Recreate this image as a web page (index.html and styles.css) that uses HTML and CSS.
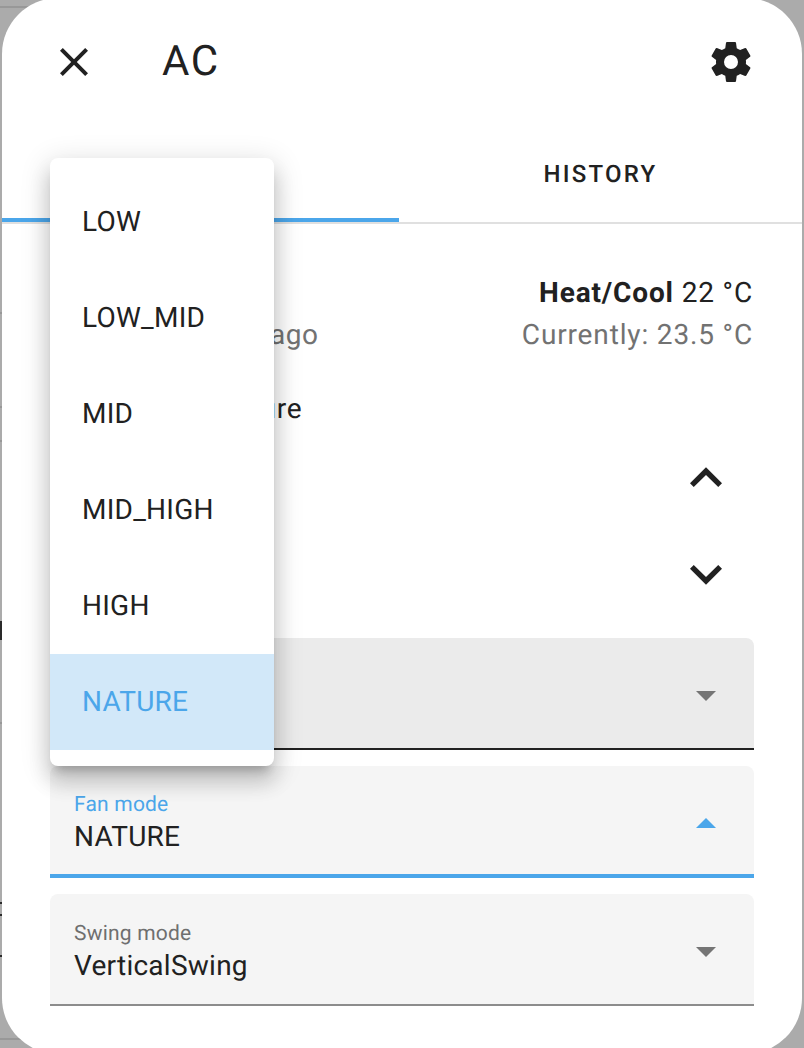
FILE: index.html
```html
<!DOCTYPE html>
<html lang="en">
<head>
<meta charset="utf-8">
<title>AC</title>
<link rel="stylesheet" href="styles.css">
</head>
<body>
<div class="backdrop-marks">
  <i class="mark line-top"></i>
  <i class="mark line-bottom"></i>
  <i class="mark m1"></i>
  <i class="mark m2"></i>
  <i class="mark m3"></i>
  <i class="mark m4"></i>
  <i class="mark m5 dark"></i>
  <i class="mark m6 dark"></i>
  <i class="mark m7 dark"></i>
  <i class="mark m8 dark"></i>
</div>
<main class="dialog">
  <header class="header">
    <button class="icon-btn">
      <svg viewBox="0 0 24 24" class="icon48"><path d="M19,6.41L17.59,5L12,10.59L6.41,5L5,6.41L10.59,12L5,17.59L6.41,19L12,13.41L17.59,19L19,17.59L13.41,12L19,6.41Z"/></svg>
    </button>
    <h1 class="title">AC</h1>
    <button class="icon-btn">
      <svg viewBox="0 0 24 24" class="icon48"><path d="M12,15.5A3.5,3.5 0 0,1 8.5,12A3.5,3.5 0 0,1 12,8.5A3.5,3.5 0 0,1 15.5,12A3.5,3.5 0 0,1 12,15.5M19.43,12.97C19.47,12.65 19.5,12.33 19.5,12C19.5,11.67 19.47,11.34 19.43,11L21.54,9.37C21.73,9.22 21.78,8.95 21.66,8.73L19.66,5.27C19.54,5.05 19.27,4.96 19.05,5.05L16.56,6.05C16.04,5.66 15.5,5.32 14.87,5.07L14.5,2.42C14.46,2.18 14.25,2 14,2H10C9.75,2 9.54,2.18 9.5,2.42L9.13,5.07C8.5,5.32 7.96,5.66 7.44,6.05L4.95,5.05C4.73,4.96 4.46,5.05 4.34,5.27L2.34,8.73C2.21,8.95 2.27,9.22 2.46,9.37L4.57,11C4.53,11.34 4.5,11.67 4.5,12C4.5,12.33 4.53,12.65 4.57,12.97L2.46,14.63C2.27,14.78 2.21,15.05 2.34,15.27L4.34,18.73C4.46,18.95 4.73,19.03 4.95,18.95L7.44,17.94C7.96,18.34 8.5,18.68 9.13,18.93L9.5,21.58C9.54,21.82 9.75,22 10,22H14C14.25,22 14.46,21.82 14.5,21.58L14.87,18.93C15.5,18.67 16.04,18.34 16.56,17.94L19.05,18.95C19.27,19.03 19.54,18.95 19.66,18.73L21.66,15.27C21.78,15.05 21.73,14.78 21.54,14.63L19.43,12.97Z"/></svg>
    </button>
  </header>

  <nav class="tabs">
    <div class="tab active"></div>
    <div class="tab">HISTORY</div>
  </nav>

  <section class="content">
    <div class="status">
      <div class="status-left">
        <div>&nbsp;</div>
        <div class="muted">Updated 2 hours ago</div>
      </div>
      <div class="status-right">
        <div><strong>Heat/Cool</strong> 22 °C</div>
        <div class="muted">Currently: 23.5 °C</div>
      </div>
    </div>

    <div class="target-label">Target temperature</div>
    <div class="stepper">
      <button class="step-btn">
        <svg viewBox="0 0 24 24" class="icon64"><path d="M7.41,15.41L12,10.83L16.59,15.41L18,14L12,8L6,14L7.41,15.41Z"/></svg>
      </button>
      <button class="step-btn">
        <svg viewBox="0 0 24 24" class="icon64"><path d="M7.41,8.58L12,13.17L16.59,8.58L18,10L12,16L6,10L7.41,8.58Z"/></svg>
      </button>
    </div>

    <div class="selects">
      <div class="select hovered">
        <div class="select-text"></div>
        <span class="arrow"></span>
      </div>
      <div class="select open">
        <div class="select-text">
          <span class="select-label">Fan mode</span>
          <span class="select-value">NATURE</span>
        </div>
        <span class="arrow"></span>
      </div>
      <div class="select">
        <div class="select-text">
          <span class="select-label">Swing mode</span>
          <span class="select-value">VerticalSwing</span>
        </div>
        <span class="arrow"></span>
      </div>
    </div>
  </section>

  <ul class="menu">
    <li class="menu-item">LOW</li>
    <li class="menu-item">LOW_MID</li>
    <li class="menu-item">MID</li>
    <li class="menu-item">MID_HIGH</li>
    <li class="menu-item">HIGH</li>
    <li class="menu-item selected">NATURE</li>
  </ul>
</main>
</body>
</html>
```

FILE: styles.css
```css
* { box-sizing: border-box; }

html, body {
  margin: 0;
  height: 1048px;
  overflow: hidden;
}

body {
  position: relative;
  background: #ababab;
  font-family: Roboto, "Liberation Sans", sans-serif;
  color: #212121;
  text-rendering: geometricPrecision;
}

.backdrop-marks { position: absolute; inset: 0; }
.mark { position: absolute; left: 0; width: 2px; height: 2px; background: #989898; }
.mark.dark { background: #2a2a2a; }
.line-top { top: 6px; width: 40px; }
.line-bottom { top: 1038px; width: 40px; }
.m1 { top: 312px; }
.m2 { top: 406px; }
.m3 { top: 440px; }
.m4 { top: 722px; }
.m5 { top: 621px; height: 19px; }
.m6 { top: 902px; }
.m7 { top: 914px; }
.m8 { top: 955px; }

.dialog {
  position: relative;
  width: 800px;
  height: 1056px;
  margin: -2px 2px 0;
  background: #fff;
  border-radius: 56px;
}

button {
  border: 0;
  padding: 0;
  background: none;
  color: inherit;
  font: inherit;
}

svg { display: block; fill: currentColor; }
.icon48 { width: 48px; height: 48px; }
.icon64 { width: 64px; height: 64px; }

.header {
  display: flex;
  align-items: center;
  height: 128px;
  padding: 0 47px 0 48px;
}

.icon-btn {
  flex: none;
  width: 48px;
  height: 48px;
}

.title {
  flex: 1;
  margin: 0 0 0 64px;
  font-size: 42px;
  font-weight: 400;
  line-height: 48px;
  letter-spacing: 1.5px;
}

.tabs {
  display: flex;
  height: 98px;
  border-bottom: 2px solid #e0e0e0;
}

.tab {
  display: flex;
  flex: 1;
  align-items: center;
  justify-content: center;
  margin-bottom: -2px;
  padding-bottom: 2px;
  font-size: 24px;
  font-weight: 500;
  letter-spacing: 2.2px;
}

.tab.active {
  flex: none;
  width: 397px;
  height: 96px;
  border-bottom: 4px solid #4ba6ea;
}

.content { padding: 0 48px; }

.status {
  display: flex;
  justify-content: space-between;
  padding: 48px 1px 0 0;
  font-size: 28px;
  line-height: 42px;
  letter-spacing: 0.85px;
}

.status-left { letter-spacing: 0.5px; }
.status-right { text-align: right; }
.muted { color: #727272; }

.target-label {
  margin-top: 32px;
  font-size: 28px;
  line-height: 42px;
  letter-spacing: 0.78px;
}

.stepper {
  display: flex;
  flex-direction: column;
  align-items: flex-end;
}

.step-btn {
  display: flex;
  align-items: center;
  justify-content: center;
  width: 96px;
  height: 96px;
}

.selects {
  display: flex;
  flex-direction: column;
  gap: 16px;
  margin-top: 16px;
}

.select {
  display: flex;
  align-items: center;
  justify-content: space-between;
  height: 112px;
  padding: 6px 38px 0 24px;
  background: #f5f5f5;
  border-bottom: 2px solid #8c8c8c;
  border-radius: 8px 8px 0 0;
}

.select.hovered { background: #ebebeb; border-bottom-color: #212121; }
.select.open { border-bottom: 4px solid #4ba6ea; }

.select-text { display: flex; flex-direction: column; }

.select-label {
  font-size: 21px;
  line-height: 28px;
  letter-spacing: 0.2px;
  color: #6f6f6f;
}

.select.open .select-label { color: #4ba6ea; }

.select-value {
  font-size: 28px;
  line-height: 36px;
  letter-spacing: 0.25px;
}

.arrow {
  width: 0;
  height: 0;
  border-left: 10px solid transparent;
  border-right: 10px solid transparent;
  border-top: 10px solid #757575;
}

.select.open .arrow {
  border-top: 0;
  border-bottom: 10px solid #4ba6ea;
}

.menu {
  position: absolute;
  top: 160px;
  left: 48px;
  width: 224px;
  margin: 0;
  padding: 16px 0;
  list-style: none;
  background: #fff;
  border-radius: 8px;
  box-shadow: 0 10px 10px -6px rgba(0,0,0,.2), 0 16px 20px 2px rgba(0,0,0,.14), 0 6px 28px 4px rgba(0,0,0,.12);
}

.menu-item {
  display: flex;
  align-items: center;
  height: 96px;
  padding: 0 0 2px 32px;
  font-size: 28px;
  letter-spacing: 0.25px;
}

.menu-item.selected {
  background: #d2e8f9;
  color: #4ba6ea;
}
```
